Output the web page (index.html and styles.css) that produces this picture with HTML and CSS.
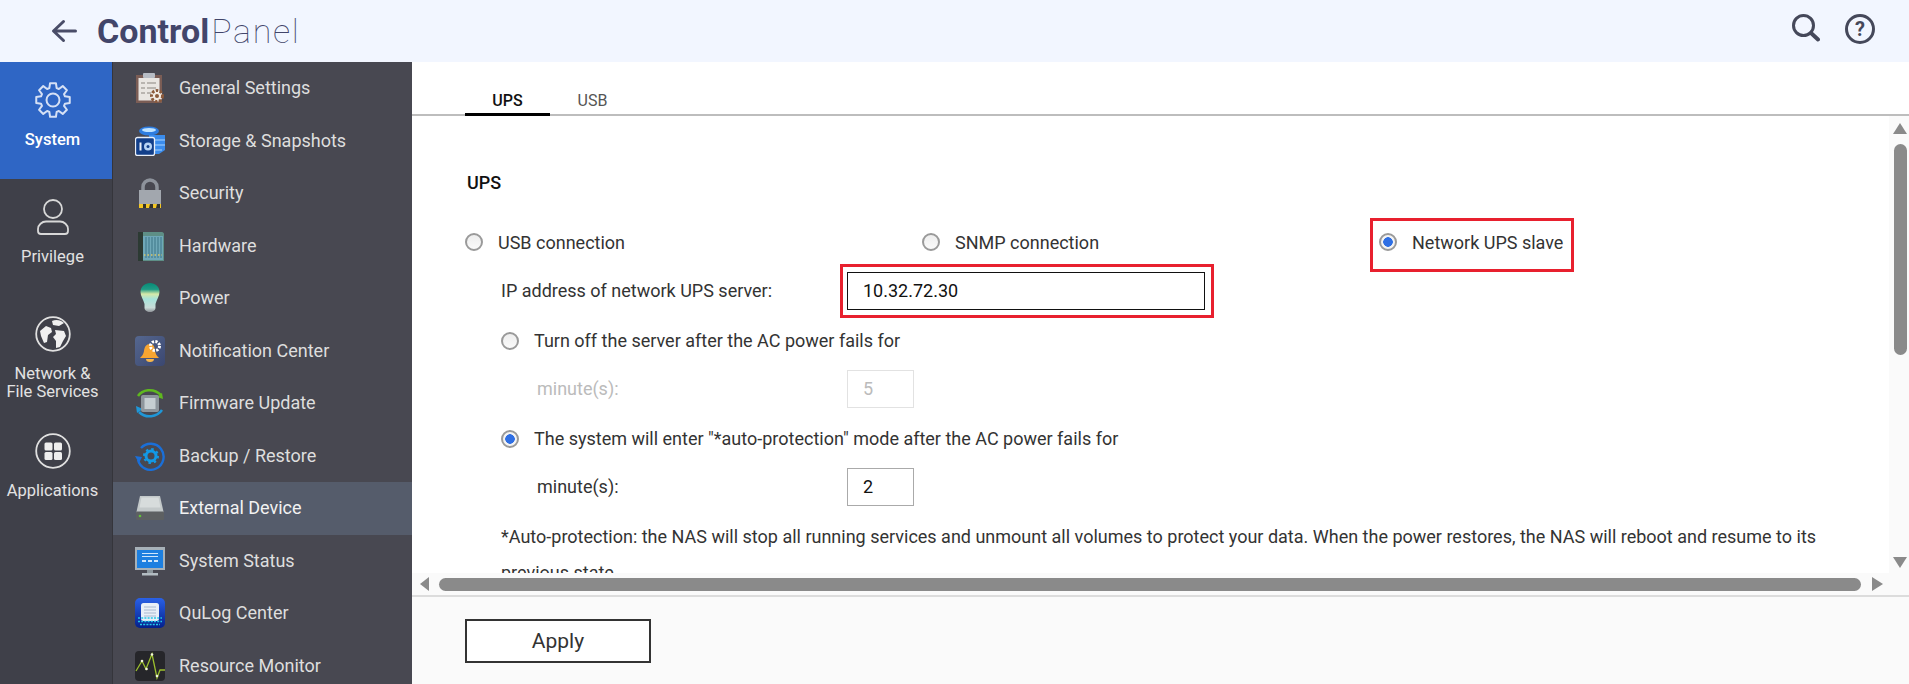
FILE: index.html
```html
<!DOCTYPE html>
<html lang="en">
<head>
<meta charset="utf-8">
<title>Control Panel</title>
<link rel="stylesheet" href="styles.css">
</head>
<body>
<header class="topbar">
  <svg class="back" viewBox="0 0 26 24" width="26" height="24"><path d="M24.5 12H3M12.5 2.5 2.5 12l10 9.500" fill="none" stroke="#4a4d68" stroke-width="3" stroke-linecap="round" stroke-linejoin="round"/></svg>
  <h1 class="title"><b>Control</b><span>Panel</span></h1>
  <div class="top-actions">
    <svg viewBox="0 0 32 32" width="32" height="32"><circle cx="15.500" cy="12.500" r="10" fill="none" stroke="#45485a" stroke-width="3"/><path d="M23 20l7 6.500" stroke="#45485a" stroke-width="4" stroke-linecap="round"/></svg>
    <svg viewBox="0 0 32 32" width="32" height="32"><circle cx="16" cy="16" r="13.500" fill="none" stroke="#45485a" stroke-width="3"/><text x="16" y="22.500" text-anchor="middle" class="qmark">?</text></svg>
  </div>
</header>
<div class="shell">
  <nav class="rail">
    <a class="rail-item active">
      <svg viewBox="0 0 36 36" width="36" height="36" fill="none" stroke="#d5e0f5" stroke-width="2" stroke-linejoin="round"><g transform="translate(18 18)"><path d="M-3.65-11.95-2.95-16.74H2.95L3.65-11.95 5.87-11.03 9.75-13.92 13.92-9.75 11.03-5.87 11.95-3.65 16.74-2.95V2.95L11.95 3.65 11.03 5.87 13.92 9.75 9.75 13.92 5.87 11.03 3.65 11.95 2.95 16.74H-2.95L-3.65 11.95-5.87 11.03-9.75 13.92-13.92 9.75-11.03 5.87-11.95 3.65-16.74 2.95V-2.95L-11.95-3.65-11.03-5.87-13.92-9.75-9.75-13.92-5.87-11.03Z"/><circle r="6.500"/></g></svg>
      <span>System</span>
    </a>
    <a class="rail-item">
      <svg viewBox="0 0 36 36" width="36" height="36" fill="none" stroke="#d8d8d8" stroke-width="1.800"><circle cx="18" cy="10" r="9"/><path d="M6 35h24c2 0 3-1 3-3v-2c0-4-4-7.500-8-7.500H11c-4 0-8 3.500-8 7.500v2c0 2 1 3 3 3z"/></svg>
      <span>Privilege</span>
    </a>
    <a class="rail-item">
      <svg viewBox="0 0 36 36" width="36" height="36"><circle cx="18" cy="18" r="16.800" fill="none" stroke="#e0e0e0" stroke-width="1.800"/><path d="M17 5c4-2 9-1 12 2l-5 3-6-1zM5 15l6-5 5 2 1 4-4 3-1 7-3 1-3-7zM20 14l9 1 2 5-3 5-3 6-4 1 0-7-3-4 3-3z" fill="#f0f0f0"/></svg>
      <span>Network &amp;<br>File Services</span>
    </a>
    <a class="rail-item">
      <svg viewBox="0 0 36 36" width="36" height="36"><circle cx="18" cy="18" r="16.800" fill="none" stroke="#e0e0e0" stroke-width="1.800"/><rect x="9.500" y="9.500" width="8" height="8" rx="1.500" fill="#eee"/><rect x="19" y="9.500" width="8" height="8" rx="1.500" fill="#eee"/><rect x="9.500" y="19" width="8" height="8" rx="1.500" fill="#eee"/><rect x="19" y="19" width="8" height="8" rx="1.500" fill="#eee"/></svg>
      <span>Applications</span>
    </a>
  </nav>
  <ul class="menu">
    <li class="menu-item">
      <svg viewBox="0 0 30 30" width="30" height="30"><rect x="1" y="2" width="26" height="28" fill="#7b5d55"/><rect x="3.500" y="5" width="21" height="22.500" fill="#e9e6e2"/><rect x="8" y="0" width="12" height="5" rx="1" fill="#b7bcc4"/><path d="M6 10h4M12 10h9M6 15h4M12 15h9M6 20h4M12 20h4" stroke="#a9a5a0" stroke-width="1.300"/><circle cx="22" cy="23" r="5.500" fill="#f2ece6" stroke="#8b5a3c" stroke-width="3" stroke-dasharray="2.500 1.500"/><circle cx="22" cy="23" r="2" fill="#8b5a3c"/></svg>
      <span>General Settings</span>
    </li>
    <li class="menu-item">
      <svg viewBox="0 0 30 30" width="30" height="30"><ellipse cx="14" cy="5" rx="10" ry="4.500" fill="#2e7de0"/><ellipse cx="14" cy="4" rx="7" ry="2" fill="#bfe3ff"/><path d="M14 9h16v15l-6 4H14z" fill="#3b8cec"/><path d="M17 14h13M17 19h13M17 24h10" stroke="#a8d4ff" stroke-width="1.200"/><rect x="0.500" y="11.500" width="19" height="18" rx="2" fill="#123f8a" stroke="#e9eff8" stroke-width="1.300"/><circle cx="13" cy="20.500" r="4" fill="#b7d4f5"/><circle cx="13" cy="20.500" r="1.500" fill="#123f8a"/><rect x="4.500" y="16.500" width="2" height="8" fill="#e9eff8"/></svg>
      <span>Storage &amp; Snapshots</span>
    </li>
    <li class="menu-item">
      <svg viewBox="0 0 30 30" width="30" height="30"><path d="M8 13V9a7 7 0 0 1 14 0v4" fill="none" stroke="#8d929b" stroke-width="3.500"/><rect x="4" y="12" width="22" height="14" fill="#a2a7ae"/><rect x="4" y="26" width="22" height="4" fill="#33322c"/><path d="M4 26h4v4H4zM11 26h4l-1 4h-3zM18 26h4l-1 4h-3zM25 26h1v4h-1z" fill="#f3c623"/></svg>
      <span>Security</span>
    </li>
    <li class="menu-item">
      <svg viewBox="0 0 30 30" width="30" height="30"><path d="M3 4c0-2 1-3 3-3h21c1 0 2 1 2 2v27H3z" fill="#5e8f86"/><rect x="3" y="1" width="5" height="29" fill="#2c3a33"/><rect x="8" y="5" width="20" height="24" fill="#6fa8b8"/><path d="M11 6v21M14 6v21M17 6v21M20 6v21M23 6v21M26 6v21" stroke="#3c7486" stroke-width="1"/><path d="M9 24h18" stroke="#d9c86a" stroke-width="1.300" stroke-dasharray="1.500 2"/></svg>
      <span>Hardware</span>
    </li>
    <li class="menu-item">
      <svg viewBox="0 0 30 30" width="30" height="30"><defs><linearGradient id="bulb" x1="0" y1="0" x2="0" y2="1"><stop offset="0" stop-color="#078a76"/><stop offset=".22" stop-color="#1f9b85"/><stop offset=".38" stop-color="#d6e9a8"/><stop offset=".55" stop-color="#a6e3da"/><stop offset=".85" stop-color="#c9dcd8"/><stop offset="1" stop-color="#8f9298"/></linearGradient></defs><path d="M15 0c5 0 9.500 3.500 9.500 9 0 4-3 8-4 12v4c0 2-2.500 4-5.500 4s-5.500-2-5.500-4v-4C8.500 17 5.500 13 5.500 9c0-5.500 4.500-9 9.500-9z" fill="url(#bulb)"/></svg>
      <span>Power</span>
    </li>
    <li class="menu-item">
      <svg viewBox="0 0 30 30" width="30" height="30"><defs><linearGradient id="nbg" x1="0" y1="0" x2="1" y2="1"><stop offset="0" stop-color="#55678f"/><stop offset="1" stop-color="#3b4770"/></linearGradient></defs><rect width="30" height="30" rx="4" fill="url(#nbg)"/><path d="M15 8c-4 0-5.500 3-6 7-.4 3-2 5-4 7h19c-2-2-3.500-4-4-7-.500-4-1-7-5-7z" fill="#f7a531"/><path d="M11 23a4 3 0 0 0 8 0z" fill="#f7b64a"/><circle cx="20" cy="10" r="4.500" fill="none" stroke="#fff" stroke-width="3" stroke-dasharray="2.200 1.300"/></svg>
      <span>Notification Center</span>
    </li>
    <li class="menu-item">
      <svg viewBox="0 0 30 30" width="30" height="30"><path d="M3 8C7 2 18-1 26 7" fill="none" stroke="#5fb81f" stroke-width="2.500"/><path d="M28 11l-6-2 5-4z" fill="#5fb81f"/><path d="M27 22C22 29 11 31 4 24" fill="none" stroke="#1f97d8" stroke-width="2.500"/><path d="M1 18l7 3-6 4z" fill="#1f97d8"/><rect x="6" y="7" width="18" height="17" rx="2" fill="#8d959c"/><rect x="9.500" y="10" width="11" height="11" fill="#c6ced2"/></svg>
      <span>Firmware Update</span>
    </li>
    <li class="menu-item">
      <svg viewBox="0 0 30 30" width="30" height="30"><path d="M6 7a13 13 0 1 1-3 12" fill="none" stroke="#1a6fd8" stroke-width="2.400"/><path d="M0 15l7 1-3 6z" fill="#1a6fd8"/><circle cx="16" cy="15" r="5" fill="none" stroke="#1299e6" stroke-width="3"/><circle cx="16" cy="15" r="7" fill="none" stroke="#1299e6" stroke-width="2" stroke-dasharray="2.500 3"/></svg>
      <span>Backup / Restore</span>
    </li>
    <li class="menu-item selected">
      <svg viewBox="0 0 30 30" width="30" height="30"><path d="M5 3h20l4 18H1z" fill="#c3c9ca"/><path d="M6.500 4.500h17l2 10H4.500z" fill="#d7dcdc"/><rect x="1" y="18.500" width="28" height="8.500" rx="1" fill="#5d6062"/><circle cx="5" cy="23" r="1.300" fill="#62c13a"/></svg>
      <span>External Device</span>
    </li>
    <li class="menu-item">
      <svg viewBox="0 0 30 30" width="30" height="30"><rect y="1" width="30" height="23" fill="#a7b1b8"/><rect x="2" y="4" width="26" height="18" fill="#1c7fe0"/><path d="M7 7.500h16M7 10.500h16" stroke="#cfe6fb" stroke-width="1.200"/><path d="M7 15h16" stroke="#cfe6fb" stroke-width="2" stroke-dasharray="4 2"/><rect x="12" y="24" width="6" height="3" fill="#8c969c"/><rect x="7" y="27" width="16" height="2.500" fill="#b3bcc2"/></svg>
      <span>System Status</span>
    </li>
    <li class="menu-item">
      <svg viewBox="0 0 30 30" width="30" height="30"><defs><linearGradient id="qbg" x1="0" y1="0" x2="0" y2="1"><stop offset="0" stop-color="#2a61e6"/><stop offset="1" stop-color="#04208c"/></linearGradient></defs><rect width="30" height="30" rx="5" fill="url(#qbg)"/><rect x="6" y="5" width="18" height="18" rx="2.500" fill="#e9eff7"/><path d="M9 9h12M9 12h12M9 15h12M9 18h12" stroke="#a9b9d0" stroke-width="1"/><path d="M3 20h24M3 23.500h24M5 26.500h20" stroke="#22c7e8" stroke-width="1.300" stroke-dasharray="2 1.200"/></svg>
      <span>QuLog Center</span>
    </li>
    <li class="menu-item">
      <svg viewBox="0 0 30 30" width="30" height="30"><rect width="30" height="30" rx="4" fill="#26262a"/><path d="M1 20l6-10 4 8 6-15 5 24 3-8h5" fill="none" stroke="#9cc02e" stroke-width="1.300"/><circle cx="7" cy="10" r="1.300" fill="#f1f5d8"/><circle cx="11.500" cy="18" r="1.300" fill="#f1f5d8"/><circle cx="17" cy="3.500" r="1.300" fill="#f1f5d8"/><circle cx="22" cy="25" r="1.300" fill="#f1f5d8"/></svg>
      <span>Resource Monitor</span>
    </li>
  </ul>
  <main class="main">
    <div class="tabs">
      <a class="tab current">UPS</a>
      <a class="tab">USB</a>
    </div>
    <div class="scroll-area">
      <section class="content">
        <h2 class="section-title">UPS</h2>
        <div class="mode-row">
          <label class="radio-line"><i class="radio"></i>USB connection</label>
          <label class="radio-line"><i class="radio"></i>SNMP connection</label>
          <label class="radio-line marked"><i class="radio on"></i>Network UPS slave</label>
        </div>
        <div class="ip-row">
          <span class="ip-label">IP address of network UPS server:</span>
          <div class="field ip-field marked-field">10.32.72.30</div>
        </div>
        <label class="radio-line sub first"><i class="radio"></i>Turn off the server after the AC power fails for</label>
        <div class="minute-row disabled">
          <span class="minute-label">minute(s):</span>
          <div class="field small">5</div>
        </div>
        <label class="radio-line sub second"><i class="radio on"></i>The system will enter "*auto-protection" mode after the AC power fails for</label>
        <div class="minute-row">
          <span class="minute-label">minute(s):</span>
          <div class="field small">2</div>
        </div>
        <p class="note">*Auto-protection: the NAS will stop all running services and unmount all volumes to protect your data. When the power restores, the NAS will reboot and resume to its previous state.</p>
      </section>
      <div class="vbar">
        <i class="arrow up"></i>
        <i class="vthumb"></i>
        <i class="arrow down"></i>
      </div>
    </div>
    <div class="hbar">
      <i class="arrow left"></i>
      <i class="hthumb"></i>
      <i class="arrow right"></i>
    </div>
    <footer class="footer">
      <button class="apply" type="button">Apply</button>
    </footer>
  </main>
</div>
</body>
</html>
```
FILE: styles.css
```css
*, *::after { box-sizing: border-box; }
html, body { margin: 0; height: 100%; }
body {
  width: 1909px;
  height: 684px;
  overflow: hidden;
  display: flex;
  flex-direction: column;
  font-family: Roboto, "Liberation Sans", sans-serif;
  background: #fff;
}
svg { display: block; flex: none; }

.topbar {
  height: 62px;
  flex: none;
  background: #f2f6ff;
  display: flex;
  align-items: center;
  padding-left: 51px;
}
.back { margin-right: 20px; }
.title {
  margin: 0;
  font-size: 34px;
  line-height: 62px;
  font-weight: 400;
  color: #42456a;
  display: flex;
}
.title b { font-weight: 700; }
.title span { font-weight: 100; margin-left: 2px; letter-spacing: 1.700px; }
.top-actions {
  margin-left: auto;
  display: flex;
  gap: 24px;
  padding: 0 33px 5px 0;
}
.qmark { font: 700 20px Roboto, sans-serif; fill: #45485a; }

.shell { flex: 1; min-height: 0; display: flex; }

.rail {
  width: 113px;
  flex: none;
  background: #3f4049;
  border-right: 1px solid #35353b;
}
.rail-item {
  height: 117px;
  padding: 20px 7px 0 0;
  display: flex;
  flex-direction: column;
  align-items: center;
  color: #e2e2e2;
  font-size: 16.500px;
  line-height: 18px;
  text-align: center;
  white-space: nowrap;
}
.rail-item span { margin-top: 13px; }
.rail-item.active { background: #2f66c5; color: #fff; font-weight: 500; }

.menu {
  width: 299px;
  flex: none;
  margin: 0;
  padding: 0;
  list-style: none;
  background: #484851;
  overflow: hidden;
}
.menu-item {
  height: 52.500px;
  display: flex;
  align-items: center;
  gap: 14px;
  padding-left: 22px;
  color: #dedede;
  font-size: 18px;
  font-weight: 400;
}
.menu-item span { padding-bottom: 1px; }
.menu-item.selected { background: #555c6b; color: #f2f2f2; }

.main { flex: 1; min-width: 0; display: flex; flex-direction: column; }

.tabs {
  height: 54px;
  flex: none;
  display: flex;
  padding-left: 53px;
  border-bottom: 2px solid #bdbdbd;
}
.tab {
  width: 85px;
  height: 54px;
  line-height: 77px;
  text-align: center;
  font-size: 16px;
  color: #555;
}
.tab.current { color: #111; font-weight: 500; border-bottom: 3px solid #000; }

.scroll-area { flex: 1; min-height: 0; display: flex; }
.content {
  flex: 1;
  min-width: 0;
  height: 100%;
  overflow: hidden;
  padding: 55px 0 0 53px;
  font-size: 18px;
  color: #333;
}
.section-title {
  margin: 0 0 0 2px;
  height: 24px;
  line-height: 24px;
  font-size: 18px;
  font-weight: 500;
  color: #111;
}
.mode-row {
  margin-top: 29px;
  height: 36px;
  display: grid;
  grid-template-columns: 457px 457px 1fr;
}
.radio-line { display: flex; align-items: center; gap: 15px; }
.radio-line.marked { position: relative; }
.radio-line.marked::after {
  content: "";
  position: absolute;
  left: -9px;
  top: -6px;
  width: 204px;
  height: 54px;
  border: 3px solid #e8202e;
}
.radio {
  width: 18px;
  height: 18px;
  flex: none;
  border-radius: 50%;
  border: 2px solid #9a9a9a;
  background: linear-gradient(#eee, #fafafa);
  display: flex;
}
.radio.on { background: radial-gradient(circle, #2f6fe4 0 4.500px, #f3f3f3 5px); }

.ip-row {
  margin-top: 12px;
  height: 38px;
  padding-left: 36px;
  display: flex;
  align-items: center;
}
.ip-label { width: 346px; padding-bottom: 2px; }
.field {
  height: 38px;
  line-height: 35px;
  border: 1px solid #aaa;
  padding-left: 15px;
  color: #111;
  background: #fff;
}
.ip-field { width: 358px; border-color: #111; position: relative; }
.marked-field::after {
  content: "";
  position: absolute;
  left: -8px;
  top: -9px;
  right: -10px;
  bottom: -9px;
  border: 3px solid #e8202e;
}
.small { width: 67px; }

.radio-line.sub { height: 30px; margin-left: 36px; padding-bottom: 2px; }
.radio-line.sub .radio { margin-top: 2px; }
.radio-line.first { margin-top: 16px; }
.radio-line.second { margin-top: 16px; }

.minute-row {
  margin-top: 14px;
  height: 38px;
  padding-left: 72px;
  display: flex;
  align-items: center;
}
.minute-label { width: 310px; padding-bottom: 2px; }
.minute-row.disabled .minute-label { color: #bbb; }
.minute-row.disabled .field { color: #bbb; border-color: #e2e2e2; }

.note {
  margin: 13px 0 0 36px;
  width: 1330px;
  line-height: 36px;
}

.vbar {
  width: 20px;
  flex: none;
  background: #fafafa;
  padding: 7px 2px 5px 4px;
  display: flex;
  flex-direction: column;
  align-items: center;
}
.vthumb {
  width: 13px;
  height: 211px;
  margin-top: 10px;
  background: #8a8a8a;
  border-radius: 7px;
}
.arrow { display: block; width: 0; height: 0; border-style: solid; border-color: transparent; }
.arrow.up { border-width: 0 7.500px 11px; border-bottom-color: #8a8a8a; }
.arrow.down { margin-top: auto; border-width: 11px 7.500px 0; border-top-color: #8a8a8a; }
.arrow.left { border-width: 7px 9px 7px 0; border-right-color: #8a8a8a; }
.arrow.right { border-width: 7px 0 7px 11px; border-left-color: #8a8a8a; }

.hbar {
  height: 24px;
  flex: none;
  background: #fafafa;
  border-bottom: 2px solid #dcdcdc;
  padding: 0 26px 0 8px;
  display: flex;
  align-items: center;
}
.hthumb {
  width: 1423px;
  height: 13px;
  margin: 0 11px 0 10px;
  background: #8a8a8a;
  border-radius: 7px;
}

.footer {
  height: 87px;
  flex: none;
  background: #fafafa;
  padding: 22px 0 0 53px;
}
.apply {
  width: 186px;
  height: 44px;
  background: #fff;
  border: 2px solid #333;
  font: 400 21px Roboto, sans-serif;
  color: #333;
  padding: 0;
}
```
